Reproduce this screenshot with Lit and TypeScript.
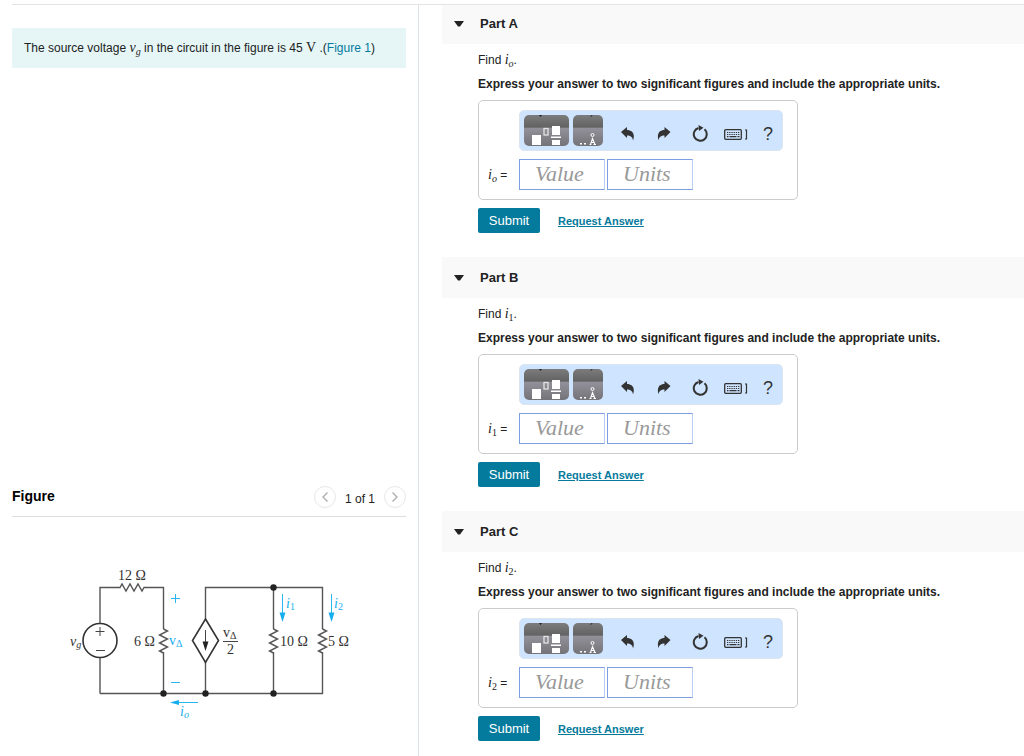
import { LitElement, html, svg, css } from "lit";
import { customElement, property } from "lit/decorators.js";

const mathStyles = css`
  .math {
    font-family: "Liberation Serif", serif;
    font-style: italic;
    font-weight: normal;
    font-size: 14px;
    line-height: 1;
  }
  .math sub {
    font-size: 10px;
    line-height: 0;
    vertical-align: -3px;
  }
  .math .upright {
    font-style: normal;
  }
`;

@customElement("math-toolbar")
class MathToolbar extends LitElement {
  static styles = css`
    :host {
      display: block;
    }
    .bar {
      box-sizing: border-box;
      display: flex;
      align-items: center;
      height: 41px;
      padding-left: 4px;
      border-radius: 5px;
      background: #cfe5ff;
      border: 1px solid #dbe5f0;
    }
    button {
      display: flex;
      align-items: center;
      justify-content: center;
      flex: none;
      box-sizing: border-box;
      width: 36px;
      height: 32px;
      padding: 6px 0 0;
      border: 0;
      background: none;
      color: #333;
      cursor: pointer;
    }
    .tile {
      width: auto;
      height: 31px;
      padding: 0;
      margin-right: 4px;
      border-radius: 5px;
      overflow: hidden;
    }
    .symbols {
      margin-right: 7px;
    }
    .help {
      width: 28px;
      font: 18px/24px "Liberation Sans", sans-serif;
    }
  `;

  render() {
    return html`
      <div class="bar" role="toolbar" aria-label="Math tools">
        <button class="tile" type="button" aria-label="Templates">
          <svg width="45" height="31" viewBox="0 0 45 31">
            <defs>
              <linearGradient id="t1" x1="0" y1="0" x2="0" y2="1">
                <stop offset="0" stop-color="#7c7c7c" /><stop offset="0.4" stop-color="#626262" />
                <stop offset="0.41" stop-color="#93929b" /><stop offset="1" stop-color="#737378" />
              </linearGradient>
            </defs>
            <rect width="45" height="31" fill="url(#t1)" />
            <path d="M15 0h3l-1.500 2z" fill="#222" />
            <path d="M8 20h9v10H8zM28 11h8v9h-8zM27 21.500h10v1.500H27zM28 25h8v5h-8z" fill="#fff" />
            <rect x="20" y="13.500" width="4" height="6.500" fill="none" stroke="#e4e4e4" stroke-width="1.300" />
          </svg>
        </button>
        <button class="tile symbols" type="button" aria-label="Symbols">
          <svg width="30" height="31" viewBox="0 0 30 31">
            <defs>
              <linearGradient id="t2" x1="0" y1="0" x2="0" y2="1">
                <stop offset="0" stop-color="#7c7c7c" /><stop offset="0.4" stop-color="#626262" />
                <stop offset="0.41" stop-color="#93929b" /><stop offset="1" stop-color="#737378" />
              </linearGradient>
            </defs>
            <rect width="30" height="31" fill="url(#t2)" />
            <path d="M17.500 1.500 19.500 0" stroke="#222" />
            <path d="M7 28h2v1.500H7zM11 28h2v1.500h-2z" fill="#fff" />
            <circle cx="19.500" cy="20" r="1.500" fill="none" stroke="#fff" />
            <path d="M16.500 29.500h2M20.500 29.500h2.500M17.500 29.500l2-6 2.500 6M18.300 27.500h2.500" fill="none" stroke="#fff" stroke-width="1.100" />
          </svg>
        </button>
        <button type="button" aria-label="Undo">
          <svg width="14" height="14" viewBox="0 0 14 14">
            <path d="M0 5 6 0v3c5 0 8.500 3.500 6 10.500-.3-3.500-2.500-5-6-5V11z" fill="currentColor" />
          </svg>
        </button>
        <button type="button" aria-label="Redo">
          <svg width="14" height="14" viewBox="0 0 14 14">
            <path d="M13.500 5 7.500 0v3C2.500 3-.500 6.500 1.500 13.500c.3-3.500 2.500-5 6-5V11z" fill="currentColor" />
          </svg>
        </button>
        <button type="button" aria-label="Reset">
          <svg width="16" height="17" viewBox="0 0 16 17">
            <path d="M12.500 4.300A6.500 6.500 0 1 1 6.500 3" fill="none" stroke="currentColor" stroke-width="2" />
            <path d="M6.500 0l5 2.800-4.500 3.200z" fill="currentColor" />
          </svg>
        </button>
        <button type="button" aria-label="Keyboard shortcuts">
          <svg width="24" height="12" viewBox="0 0 24 12">
            <rect x=".7" y="1.700" width="16.600" height="9.600" rx="1" fill="none" stroke="currentColor" stroke-width="1.300" />
            <path d="M3 4.500h12.500M3 6.500h12.500" stroke="currentColor" stroke-width="1.100" stroke-dasharray="1.300 .9" />
            <path d="M3 8.700h1.500M5.500 8.700h7M13.500 8.700h2" stroke="currentColor" stroke-width="1.200" />
            <path d="M21 2h1.500v9H21" fill="none" stroke="currentColor" stroke-width="1.200" />
          </svg>
        </button>
        <button class="help" type="button" aria-label="Help">?</button>
      </div>
    `;
  }
}

@customElement("answer-part")
class AnswerPart extends LitElement {
  @property() name = "";
  @property() index = "";

  static styles = [
    mathStyles,
    css`
      :host {
        display: block;
      }
      .header {
        display: flex;
        align-items: center;
        box-sizing: border-box;
        height: 41px;
        padding-left: 12px;
        background: #f9f9f9;
      }
      :host(.first) .header {
        height: 39px;
        padding-bottom: 2px;
      }
      .toggle {
        display: flex;
        align-items: center;
        gap: 16px;
        padding: 0;
        border: 0;
        background: none;
        color: #222;
        font: bold 13px/20px "Liberation Sans", sans-serif;
      }
      .body {
        padding: 4px 24px 0 36px;
      }
      p {
        margin: 0;
        line-height: 24px;
      }
      .sub-o {
        font-style: italic;
      }
      .digit {
        font-style: normal;
      }
      .instructions {
        font-weight: bold;
        font-size: 12px;
      }
      .answer {
        box-sizing: border-box;
        display: grid;
        grid-template-columns: 31px 264px;
        row-gap: 8px;
        align-items: center;
        width: 320px;
        max-width: 100%;
        margin: 4px 0 8px;
        padding: 9px;
        border: 1px solid #ccc;
        border-radius: 5px;
      }
      math-toolbar {
        grid-column: 2;
      }
      label {
        white-space: nowrap;
        font-size: 12px;
      }
      .fields {
        display: flex;
        gap: 2px;
      }
      input {
        box-sizing: border-box;
        width: 86px;
        height: 31px;
        padding: 0 0 2px 15px;
        border: 1px solid #7d9fe0;
        border-right-color: #b9cdf3;
        border-radius: 0;
        background: #fff;
        font: italic 22px "Liberation Serif", serif;
        color: #333;
      }
      input::placeholder {
        color: #999;
        opacity: 1;
      }
      .actions {
        display: flex;
        align-items: center;
        gap: 18px;
        padding-bottom: 24px;
      }
      :host(.last) .actions {
        padding-bottom: 0;
      }
      .submit {
        width: 62px;
        height: 25px;
        padding: 0;
        border: 0;
        border-radius: 2px;
        background: #047a9c;
        color: #fff;
        font: 13px "Liberation Sans", sans-serif;
      }
      a {
        color: #047a9c;
        font-weight: bold;
        font-size: 11px;
      }
    `,
  ];

  render() {
    const symbol = html`<span class="math">i<sub class=${this.index === "o" ? "sub-o" : "digit"}>${this.index}</sub></span>`;
    return html`
      <section>
        <div class="header">
          <button class="toggle" type="button" aria-expanded="true">
            <svg width="10" height="6" viewBox="0 0 10 6"><path d="M0 0h10L6 5.500H4z" fill="currentColor" /></svg>
            Part ${this.name}
          </button>
        </div>
        <div class="body">
          <p>Find ${symbol}.</p>
          <p class="instructions">Express your answer to two significant figures and include the appropriate units.</p>
          <div class="answer">
            <math-toolbar></math-toolbar>
            <label for="value">${symbol} =</label>
            <div class="fields">
              <input id="value" type="text" placeholder="Value" />
              <input type="text" placeholder="Units" aria-label="Units" />
            </div>
          </div>
          <div class="actions">
            <button class="submit" type="button">Submit</button>
            <a href="#request">Request Answer</a>
          </div>
        </div>
      </section>
    `;
  }
}

const resistor = (x: number, y: number) => svg`
  <path class="wire" d="M${x} ${y}l4 2-8 4 8 4-8 4 8 4-8 4 4 2" />
`;

@customElement("circuit-diagram")
class CircuitDiagram extends LitElement {
  static styles = css`
    :host {
      display: block;
    }
    svg {
      display: block;
    }
    .wire {
      fill: none;
      stroke: #555;
      stroke-width: 1.4;
    }
    .shape {
      fill: #fff;
      stroke: #333;
      stroke-width: 1.6;
    }
    .dot,
    .head {
      fill: #222;
    }
    .thin {
      stroke: #444;
      stroke-width: 1;
      fill: none;
    }
    .flow {
      stroke: #29b6f0;
      stroke-width: 1;
      fill: none;
    }
    .flow-head {
      fill: #17aeee;
    }
    text {
      font-family: "Liberation Serif", serif;
      font-size: 14px;
      fill: #333;
    }
    .it {
      font-style: italic;
    }
    .small {
      font-size: 10px;
    }
    .blue {
      fill: #17aeee;
    }
  `;

  render() {
    return html`
      <svg width="300" height="165" viewBox="60 560 300 165" role="img" aria-label="Circuit diagram">
        <path class="wire" d="M100 693.500V587.500h20l2-3.500 4 7 4-7 4 7 4-7 4 7 2-3.500H163.500V629M163.500 652v41.500M100 693.500H322.500V652M205.500 693.500V587.500H322.500V629M273.500 587.500V629M273.500 652v41.500" />
        ${resistor(163.5, 629)} ${resistor(273.5, 629)} ${resistor(322.5, 629)}
        <circle class="shape" cx="100" cy="640.500" r="17" />
        <path class="thin" d="M95.500 631.500h9M100 627v9M96 650.500h9" />
        <path class="shape" d="M205.500 619l13 21.500-13 22-13-22z" />
        <path class="thin" d="M205.500 630v14" />
        <path class="head" d="M202.500 641.500h6l-3 9.500z" />
        <circle class="dot" cx="163.500" cy="693.500" r="3.200" />
        <circle class="dot" cx="205.500" cy="693.500" r="3.200" />
        <circle class="dot" cx="273.500" cy="693.500" r="3.200" />
        <circle class="dot" cx="273.500" cy="587.500" r="3.200" />
        <text x="118" y="580">12 Ω</text>
        <text x="134" y="646">6 Ω</text>
        <text x="280" y="646">10 Ω</text>
        <text x="328" y="646">5 Ω</text>
        <text class="it" x="70" y="646">v<tspan class="small" dy="2">g</tspan></text>
        <text class="blue" x="169" y="645">v<tspan class="small" dy="2">Δ</tspan></text>
        <text x="223" y="637">v<tspan class="small" dy="2">Δ</tspan></text>
        <path class="thin" d="M223 641.500h15" />
        <text x="227" y="654">2</text>
        <path class="flow" d="M171 598.500h9M175.500 594v9M171 682.500h9" />
        <path class="flow" d="M198 702.500H176M282.500 594v20M331.500 594v20" />
        <path class="flow-head" d="M170 702.500l9-2.500v5zM279.500 612.500h6l-3 9.500zM328.500 612.500h6l-3 9.500z" />
        <text class="it blue" x="180" y="716">i<tspan class="small" dy="2">o</tspan></text>
        <text class="blue" x="286" y="608"><tspan class="it">i</tspan><tspan class="small" dy="2">1</tspan></text>
        <text class="blue" x="334" y="608"><tspan class="it">i</tspan><tspan class="small" dy="2">2</tspan></text>
      </svg>
    `;
  }
}

@customElement("app-root")
class AppRoot extends LitElement {
  static styles = [
    mathStyles,
    css`
      :host {
        display: block;
        background: #fff;
        color: #222;
        font: 12px "Liberation Sans", sans-serif;
      }
      .page {
        box-sizing: border-box;
        min-height: 100vh;
        display: grid;
        grid-template-rows: 1fr;
        grid-template-columns: minmax(0, 407fr) minmax(0, 605fr);
        margin-left: 12px;
        padding-top: 4px;
      }
      .left {
        display: flex;
        flex-direction: column;
        padding: 23px 12px 31px 0;
        border-top: 1px solid #e4e4e4;
        border-right: 1px solid #dae3ea;
      }
      .right {
        border-top: 1px solid #e4e4e4;
        padding-left: 23px;
      }
      .problem {
        margin: 0;
        padding: 8px 12px;
        background: #e6f6f7;
        line-height: 24px;
      }
      a {
        color: #047a9c;
        text-decoration: none;
      }
      .figure {
        margin-top: auto;
      }
      .figure-head {
        display: flex;
        align-items: center;
        justify-content: space-between;
        height: 38px;
        border-bottom: 1px solid #ddd;
      }
      h2 {
        margin: 0;
        padding-bottom: 2px;
        font-size: 14px;
        color: #000;
      }
      .pager {
        display: flex;
        align-items: center;
        gap: 9px;
      }
      .pager span {
        padding-top: 3px;
      }
      .pager button {
        display: flex;
        align-items: center;
        justify-content: center;
        width: 22px;
        height: 22px;
        padding: 0;
        border: 1px solid #e8e8e8;
        border-radius: 50%;
        background: #fff;
      }
      circuit-diagram {
        margin: 43px 0 0 48px;
      }
    `,
  ];

  render() {
    return html`
      <main class="page">
        <div class="left">
          <p class="problem">
            The source voltage <span class="math">v<sub>g</sub></span> in the circuit in the figure is 45
            <span class="math"><span class="upright">V</span></span> .(<a href="#figure">Figure 1</a>)
          </p>
          <section class="figure" id="figure">
            <div class="figure-head">
              <h2>Figure</h2>
              <div class="pager">
                <button type="button" aria-label="Previous figure" disabled>
                  <svg width="6" height="10" viewBox="0 0 6 10"><path d="M5.500.5 1 5l4.500 4.500" fill="none" stroke="#aaa" stroke-width="1.300" /></svg>
                </button>
                <span>1 of 1</span>
                <button type="button" aria-label="Next figure" disabled>
                  <svg width="6" height="10" viewBox="0 0 6 10"><path d="M.5.5 5 5 .5 9.500" fill="none" stroke="#aaa" stroke-width="1.300" /></svg>
                </button>
              </div>
            </div>
            <circuit-diagram></circuit-diagram>
          </section>
        </div>
        <div class="right">
          <answer-part class="first" name="A" index="o"></answer-part>
          <answer-part name="B" index="1"></answer-part>
          <answer-part class="last" name="C" index="2"></answer-part>
        </div>
      </main>
    `;
  }
}
